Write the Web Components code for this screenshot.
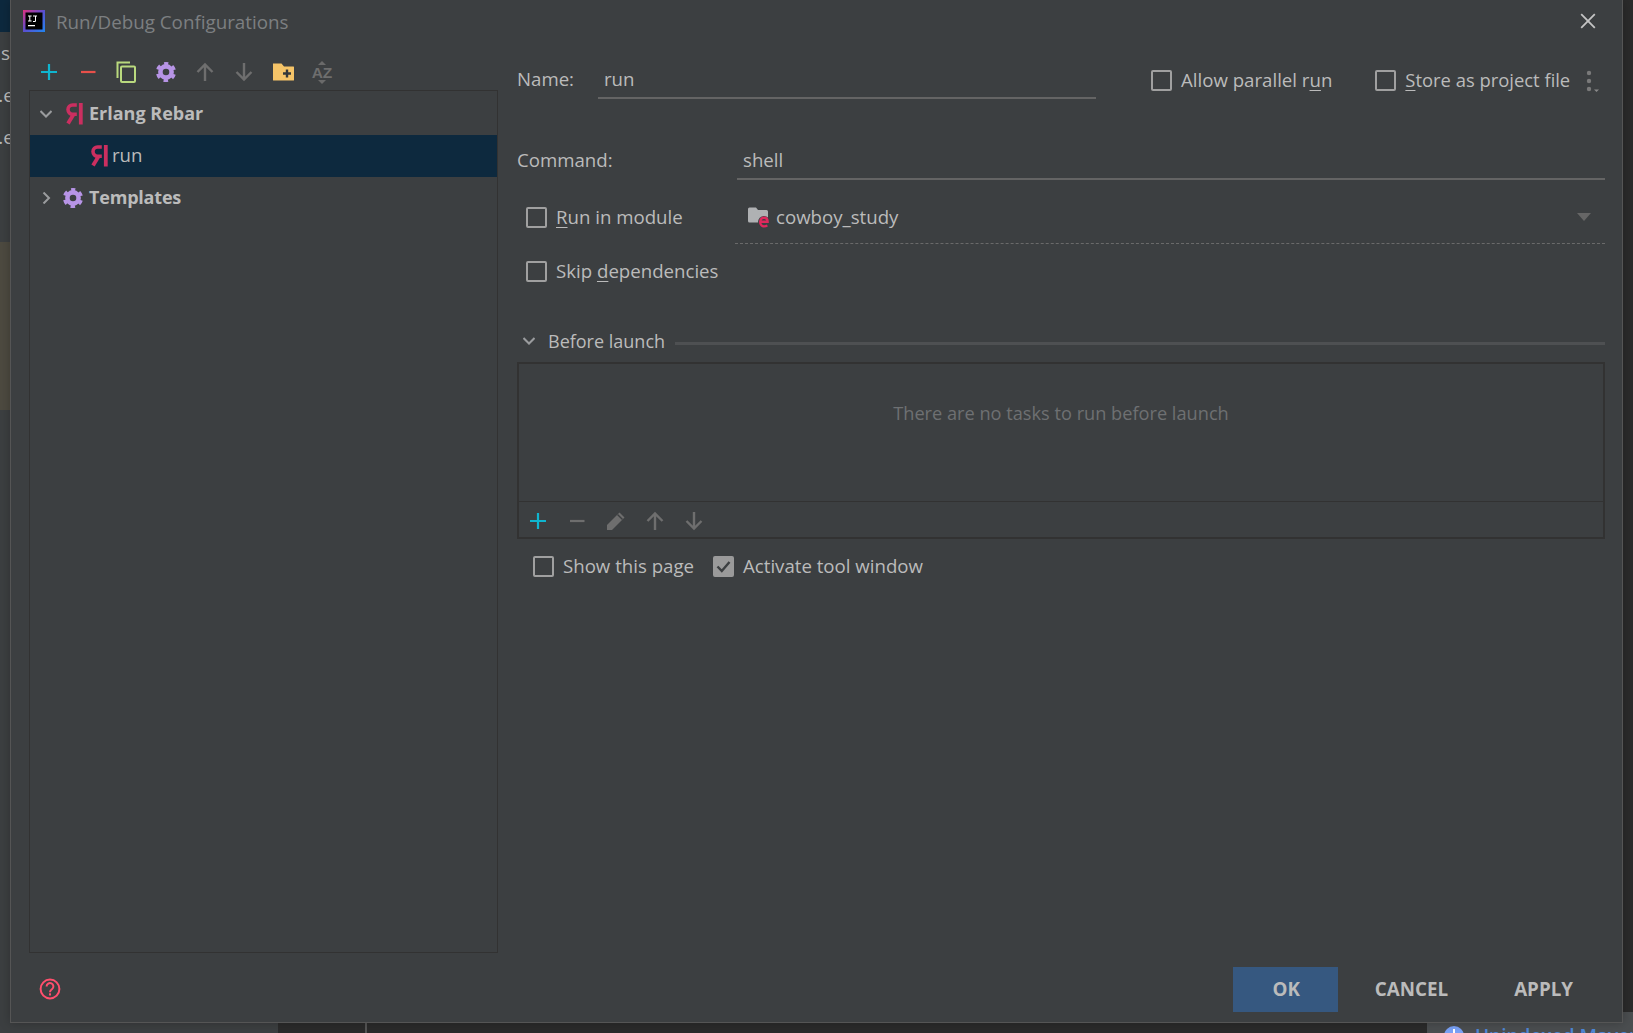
<!DOCTYPE html>
<html lang="en"><head><meta charset="utf-8"><title>Run/Debug Configurations</title>
<style>
html,body{margin:0;padding:0;width:1633px;height:1033px;overflow:hidden;background:#2b2b2b;font-family:"Open Sans","Noto Sans",sans-serif;font-size:18.65px;color:#bbb}
body{position:relative}
.lbl{padding-bottom:1px}
</style></head><body>
<ide-backdrop></ide-backdrop>
<config-dialog>
  <dialog-title slot="title">Run/Debug Configurations</dialog-title>

  <icon-bar slot="tools">
    <ide-icon name="plus"></ide-icon><ide-icon name="minus"></ide-icon><ide-icon name="copy"></ide-icon><ide-icon name="gear"></ide-icon><ide-icon name="up"></ide-icon><ide-icon name="down"></ide-icon><ide-icon name="folder"></ide-icon><ide-icon name="sort"></ide-icon>
  </icon-bar>
  <config-tree slot="tree">
    <tree-row chevron="down" bold><ide-icon slot="icon" name="rebar" style="margin-left:1px;margin-right:-1px"></ide-icon>Erlang Rebar</tree-row>
    <tree-row level="1" selected><ide-icon slot="icon" name="rebar"></ide-icon>run</tree-row>
    <tree-row chevron="right" bold style="letter-spacing:-.2px"><ide-icon slot="icon" name="gear" style="margin-left:-4px;margin-right:3px"></ide-icon>Templates</tree-row>
  </config-tree>

  <form-row slot="form" style="height:40px;margin-top:17px">
    <span class="lbl" style="width:81px">Name:</span>
    <text-field style="width:498px">run</text-field>
    <check-box style="margin-left:55px;margin-top:2px"><span>Allow parallel r<u>u</u>n</span></check-box>
    <check-box style="margin-left:43px;margin-top:2px;font-size:18.4px"><span><u>S</u>tore as project file</span></check-box>
    <ide-icon name="more" style="margin-left:14px;margin-top:6px"></ide-icon>
  </form-row>
  <form-row slot="form" style="height:40px;margin-top:41px">
    <span class="lbl" style="width:220px">Command:</span>
    <text-field style="flex:1" pad="6">shell</text-field>
  </form-row>
  <form-row slot="form" style="height:47px;margin-top:17px;padding-left:9px">
    <check-box style="width:209px;margin-bottom:7px"><span><u>R</u>un in module</span></check-box>
    <combo-field style="flex:1"><ide-icon slot="icon" name="module"></ide-icon>cowboy_study</combo-field>
  </form-row>
  <form-row slot="form" style="height:40px;margin-top:7px;padding-left:9px">
    <check-box><span>Skip <u>d</u>ependencies</span></check-box>
  </form-row>
  <section-head slot="form" style="margin-top:37px">Before launch</section-head>
  <task-box slot="form" style="margin-top:8px">
    There are no tasks to run before launch
    <icon-bar slot="tools">
      <ide-icon name="plus"></ide-icon><ide-icon name="minusgrey"></ide-icon><ide-icon name="pencil"></ide-icon><ide-icon name="up"></ide-icon><ide-icon name="down"></ide-icon>
    </icon-bar>
  </task-box>
  <form-row slot="form" style="height:40px;margin-top:7px;padding-left:16px">
    <check-box><span>Show this page</span></check-box>
    <check-box checked style="margin-left:19px"><span>Activate tool window</span></check-box>
  </form-row>

  <ide-icon slot="help" name="help"></ide-icon>
  <dialog-button slot="buttons" primary style="width:105px;padding-left:2px">OK</dialog-button>
  <dialog-button slot="buttons" style="margin-left:37px">CANCEL</dialog-button>
  <dialog-button slot="buttons" style="margin-left:66px">APPLY</dialog-button>
</config-dialog>

<script>
const ICONS={
 plus:[24,24,'<path d="M12 4v16M4 12h16" stroke="#0fb5cf" stroke-width="2.2"/>'],
 minus:[24,24,'<path d="M5 12h14.5" stroke="#e8504a" stroke-width="2.2"/>'],
 minusgrey:[24,24,'<path d="M5 12h14.5" stroke="#6e6e6e" stroke-width="2.2"/>'],
 copy:[24,24,'<g fill="none" stroke="#b9d97e" stroke-width="2"><path d="M2.500 18V2.500H15"/><rect x="6" y="6.500" width="14" height="15.500" rx="1"/></g>'],
 gear:[24,24,'<g fill="none" stroke="#b794e6"><circle cx="12" cy="12" r="5.6" stroke-width="4.6"/><circle cx="12" cy="12" r="8.4" stroke-width="3.4" stroke-dasharray="4.4 4.4" stroke-dashoffset="2.2" transform="rotate(-90 12 12)"/></g>'],
 up:[24,24,'<path d="M12 21V4.5M4.5 12 12 4.5l7.5 7.5" fill="none" stroke="#6e6e6e" stroke-width="2.4"/>'],
 down:[24,24,'<path d="M12 3v16.5M4.5 12l7.5 7.5 7.5-7.5" fill="none" stroke="#6e6e6e" stroke-width="2.4"/>'],
 folder:[24,24,'<path d="M2 3.5h8.5l2.5 3h9.5a.5.5 0 0 1 .5.5v13a.5.5 0 0 1-.5.5H2.500A.5.5 0 0 1 2 20z" fill="#f5c468"/><path d="M16 9.500v8M12 13.500h8" stroke="#34383a" stroke-width="2.400"/>'],
 sort:[24,24,'<path d="M12 1l4 4H8zM12 24l-4-4h8z" fill="#6a6a6a"/><text x="12" y="18.4" text-anchor="middle" font-family="Liberation Sans,sans-serif" font-weight="700" font-size="15.5" fill="#6e6e6e">AZ</text>'],
 pencil:[24,24,'<path d="M3 21v-5L15.500 3.500l5 5L8 21z" fill="#6e6e6e"/><path d="M13.500 5.500l5 5" stroke="#3c3f41" stroke-width="1.400"/>'],
 rebar:[18,22,'<g fill="none" stroke="#cb2f60"><path d="M14.800 0v21.500" stroke-width="3.800"/><path d="M10.800 2H6.600a4.400 4.400 0 0 0 0 9.200h4.200" stroke-width="3.600"/><path d="M7.800 11 2 20.600" stroke-width="3.800"/></g>'],
 module:[22,22,'<path d="M0 3a1.500 1.500 0 0 1 1.500-1.500H8l2 2.500h8.500A1.500 1.500 0 0 1 20 5.500V16.500H1.500A1.500 1.500 0 0 1 0 15z" fill="#afb1b3"/><circle cx="16" cy="16" r="6" fill="#3c3f41"/><path d="M12.200 15.800h7.400c0-2.600-1.600-4-3.600-4s-3.800 1.600-3.800 4.200 1.800 4.400 3.900 4.400c1.300 0 2.400-.4 3.200-1" fill="none" stroke="#e0285d" stroke-width="2.400"/>'],
 more:[16,26,'<circle cx="5" cy="4" r="2.200" fill="#7a7a7a"/><circle cx="5" cy="12" r="2.200" fill="#7a7a7a"/><circle cx="5" cy="20" r="2.200" fill="#7a7a7a"/><path d="M10 20.500h5l-2.500 2.500z" fill="#8a8a8a"/>'],
 help:[22,22,'<circle cx="11" cy="11" r="9.400" fill="none" stroke="#ff4f6d" stroke-width="2"/><path d="M7.600 8.500a3.400 3.400 0 1 1 5.400 2.700c-1.300 1-2 1.500-2 3" fill="none" stroke="#ff4f6d" stroke-width="2"/><rect x="10" y="15.300" width="2" height="2.200" fill="#ff4f6d"/>'],
 close:[16,16,'<path d="M1.200 1.200l13.600 13.600M14.800 1.200 1.200 14.800" stroke="#c4c4c4" stroke-width="1.800"/>'],
 logo:[22,22,'<defs><linearGradient id="lg" x1="0" y1="0" x2="1" y2="1"><stop offset="0" stop-color="#e0317e"/><stop offset=".5" stop-color="#5a4fd0"/><stop offset="1" stop-color="#1f86f0"/></linearGradient></defs><rect width="22" height="22" fill="url(#lg)"/><rect x="2.500" y="2.500" width="17" height="17" fill="#000"/><path d="M5 5.500h3.600v1H7.300v4h1.300v1H5v-1h1.300v-4H5zM10 5.500h4v1h-1v4.200c0 .8-.6 1.300-1.400 1.300H10v-1h1.200c.5 0 .8-.2.800-.6V6.500h-2zM5 15h7v1.200H5z" fill="#fff"/>']
};
function def(name,html,proto){
  const tpl=document.createElement('template');tpl.innerHTML=html;
  customElements.define(name,class extends HTMLElement{
    constructor(){super();this.attachShadow({mode:'open'}).appendChild(tpl.content.cloneNode(true));}
    connectedCallback(){proto&&proto.call(this);}
  });
}
def('ide-icon','<style>:host{display:inline-flex;flex:none;line-height:0}svg{display:block}</style><span id="s"></span>',function(){
  const [w,h,body]=ICONS[this.getAttribute('name')];
  this.shadowRoot.getElementById('s').innerHTML=`<svg width="${w}" height="${h}" viewBox="0 0 ${w} ${h}" aria-hidden="true">${body}</svg>`;
});
def('ide-backdrop',`<style>
:host{position:absolute;inset:0;display:grid;grid-template-columns:10px 1fr 10px;grid-template-rows:1fr 10px;background:#2b2b2b;font-size:19px;color:#bbb;overflow:hidden}
.left{display:flex;flex-direction:column;background:#3c3f41;overflow:hidden}
.nav{height:32px;background:#0d293e;flex:none}
.t{height:42px;line-height:42px;white-space:nowrap;display:flex;justify-content:flex-end;flex:none}
.t span{margin-right:-4px;flex:none}
.t span.w{margin-right:0}
.hl{height:168px;background:#4d4a40;margin-top:84px;flex:none}
.bottom{grid-column:1/4;display:flex;background:#2b2b2b}
.b1{width:278px;background:#3c3f41}
.b2{width:87px}
.b3{width:2px;background:#555}
.toast{position:absolute;left:1427px;top:1012px;right:0;bottom:0;background:#4b4e50;display:flex;align-items:flex-start;gap:11px;padding:14px 0 0 17px;overflow:hidden}
.dot{width:20px;height:20px;border-radius:50%;background:#7aa2f7;position:relative;flex:none}
.dot:after{content:"";position:absolute;left:9px;top:3px;width:2px;height:9px;background:#fff}
.msg{color:#4f88d8;line-height:26px;white-space:nowrap;margin-top:-3px;font-weight:600}
</style>
<div class="left"><div class="nav"></div><div class="t"><span class="w">s</span></div><div class="t"><span>.e</span></div><div class="t"><span>.e</span></div><div class="hl"></div></div>
<div></div><div></div>
<div class="bottom"><div class="b1"></div><div class="b2"></div><div class="b3"></div></div>
<div class="toast"><div class="dot"></div><div class="msg">Unindexed Maven</div></div>`);
def('dialog-title',`<style>:host{display:flex;align-items:center;height:42px;padding:0 0 0 12px;color:#7c7f81;font-size:18.8px;line-height:26px}
ide-icon{margin-right:11px}.x{margin-left:auto;margin-right:26px}span{padding-top:2px}</style>
<ide-icon name="logo"></ide-icon><span><slot></slot></span><ide-icon class="x" name="close"></ide-icon>`);
def('icon-bar',`<style>:host{display:flex;align-items:center}::slotted(ide-icon){width:39px;justify-content:center}</style><slot></slot>`);
def('config-dialog',`<style>
:host{position:absolute;left:10px;top:0;width:1613px;height:1023px;box-sizing:border-box;border:1px solid #555;border-top:none;background:#3c3f41;display:flex;flex-direction:column;box-shadow:0 0 10px rgba(0,0,0,.25);font-size:18.65px;color:#bbb}
.main{flex:1;display:flex;min-height:0}
.side{width:469px;margin-left:18px;display:flex;flex-direction:column;flex:none}
.tools{height:36px;padding:12px 0 0 0;display:flex;align-items:center;flex:none}
.form{flex:1;margin-left:19px;margin-right:17px;display:flex;flex-direction:column;min-width:0}
.foot{height:69px;flex:none;display:flex;align-items:center;padding-left:28px;box-sizing:border-box}
.btns{margin-left:auto;margin-right:49px;display:flex;align-items:center;padding-top:4px}
.help{padding-top:2px;display:flex}
</style>
<slot name="title"></slot>
<div class="main"><div class="side"><div class="tools"><slot name="tools"></slot></div><slot name="tree"></slot></div>
<div class="form"><slot name="form"></slot></div></div>
<div class="foot"><div class="help"><slot name="help"></slot></div><div class="btns"><slot name="buttons"></slot></div></div>`);
def('config-tree',`<style>:host{display:block;flex:1;box-sizing:border-box;border:1px solid #323232;padding-top:2px;min-height:0}</style><slot></slot>`);
def('tree-row',`<style>
:host{display:flex;align-items:center;height:42px;line-height:26px;font-size:18.65px;color:#bbb;white-space:nowrap}
:host([selected]){background:#0d293e}
:host([bold]){font-weight:700;font-size:18px}
:host([level="1"]){padding-left:61px}
.c{width:35px;flex:none;display:flex;padding-left:10px;box-sizing:border-box}
:host([level="1"]) .c{display:none}
.i{width:24px;flex:none;display:flex}
:host([level="1"]) .i{width:21px}
span{margin-bottom:2px}
svg{display:block}
</style><div class="c"><svg width="12" height="12" viewBox="0 0 12 12"><path id="p" fill="none" stroke="#9a9c9e" stroke-width="2"/></svg></div><div class="i"><slot name="icon"></slot></div><span><slot></slot></span>`,function(){
  const c=this.getAttribute('chevron');
  if(c)this.shadowRoot.getElementById('p').setAttribute('d',c==='down'?'M.5 3 6 8.500 11.500 3':'M3.500 .5 9 6l-5.500 5.500');
});
def('form-row',`<style>:host{display:flex;align-items:center;flex:none;white-space:nowrap;line-height:26px}</style><slot></slot>`);
def('text-field',`<style>:host{display:flex;align-items:center;box-sizing:border-box;height:40px;border-bottom:2px solid #646464;padding-left:6px;padding-top:2px;color:#bbb}</style><slot></slot>`);
def('combo-field',`<style>:host{display:flex;align-items:center;box-sizing:border-box;height:47px;border-bottom:1px dashed #6a6a6a;padding-left:13px;padding-bottom:6px;color:#bbb;position:relative}
.i{width:28px;display:flex}.a{margin-left:auto;margin-right:14px;width:0;height:0;border:7px solid transparent;border-top:8px solid #666;border-bottom:0}</style>
<div class="i"><slot name="icon"></slot></div><span><slot></slot></span><div class="a"></div>`);
def('check-box',`<style>:host{display:inline-flex;align-items:center;white-space:nowrap;line-height:26px;color:#bbb}
.b{width:21px;height:21px;box-sizing:border-box;border:2px solid #a0a0a0;border-radius:2px;margin-right:9px;flex:none;display:flex;align-items:center;justify-content:center}
svg{display:none}:host([checked]) .b{background:#9a9a9a;border-color:#9a9a9a}:host([checked]) svg{display:block}
::slotted(span){text-underline-offset:3px}</style>
<div class="b"><svg width="15" height="13" viewBox="0 0 15 13"><path d="M1.500 6.500 5.800 11 13.500 2" fill="none" stroke="#3c3f41" stroke-width="2.400"/></svg></div><slot></slot>`);
def('section-head',`<style>:host{display:flex;align-items:center;flex:none;height:26px;line-height:26px;font-size:18px}
svg{margin-left:6px;margin-right:13px;display:block}.l{flex:1;height:3px;background:#4e5052;margin-left:10px;margin-top:4px}</style>
<svg width="12" height="12" viewBox="0 0 12 12"><path d="M.5 3 6 8.500 11.500 3" fill="none" stroke="#9a9c9e" stroke-width="2"/></svg><span><slot></slot></span><div class="l"></div>`);
def('task-box',`<style>:host{display:flex;flex-direction:column;flex:none;box-sizing:border-box;height:177px;border:2px solid #323232}
.e{flex:1;display:flex;justify-content:center;color:#6e7072;line-height:26px;padding-top:36px;box-sizing:border-box;font-size:18.2px}
.t{height:36px;flex:none;border-top:1px solid #323232;box-sizing:border-box;display:flex;align-items:center;margin-left:-1px;padding-top:2px}</style>
<div class="e"><span><slot></slot></span></div><div class="t"><slot name="tools"></slot></div>`);
def('dialog-button',`<style>:host{display:flex;align-items:center;justify-content:center;box-sizing:border-box;height:45px;padding-bottom:2px;font-weight:700;font-size:18.8px;color:#bbb;line-height:26px}
:host([primary]){background:#365880}</style><slot></slot>`);
</script>
</body></html>
